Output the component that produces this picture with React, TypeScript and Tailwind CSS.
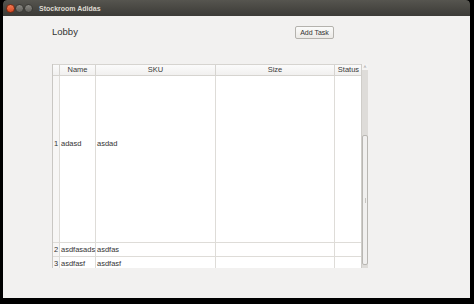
const rows = [
  { n: "1", name: "adasd", sku: "asdad", h: "h-[167px]", pad: "pt-[63px]" },
  { n: "2", name: "asdfasads", sku: "asdfas", h: "h-[14px]", pad: "pt-[2px]" },
  { n: "3", name: "asdfasf", sku: "asdfasf", h: "h-[14px]", pad: "pt-[2px]" },
];

function TitleBar() {
  return (
    <div className="flex h-[16px] items-center rounded-t-[4px] bg-gradient-to-b from-[#56554f] to-[#3c3b37] pl-[3px]">
      <span className="h-[9px] w-[9px] rounded-full border border-[#7a2a14] bg-gradient-to-b from-[#f27b55] to-[#d9471f]" />
      <span className="h-[9px] w-[9px] rounded-full border border-[#3a3935] bg-gradient-to-b from-[#8a8984] to-[#5f5e59]" />
      <span className="h-[9px] w-[9px] rounded-full border border-[#3a3935] bg-gradient-to-b from-[#8a8984] to-[#5f5e59]" />
      <span className="ml-[6px] text-[7px] font-bold leading-none text-[#dfdbd2]">Stockroom Adidas</span>
    </div>
  );
}

function Scrollbar() {
  return (
    <div className="flex w-[7px] flex-col border-l border-[#cfcdc9] bg-[#dedcd9]">
      <div className="flex h-[6px] items-center justify-center bg-[#f4f3f2] text-[5px] leading-none text-[#888]">
        ˄
      </div>
      <div className="h-[65px]" />
      <div className="flex flex-1 items-center justify-center rounded-[2px] border border-[#b9b7b3] bg-[#f1f0ef]">
        <span className="h-[5px] w-[1px] bg-[#c6c4c0]" />
      </div>
      <div className="h-[3px]" />
    </div>
  );
}

export default function App() {
  return (
    <div className="h-[304px] w-[474px] overflow-hidden bg-black pl-[3px] pr-[4px] pb-[6px]" style={{ fontFamily: '"Liberation Sans", Arial, sans-serif' }}>
      <div className="flex h-[298px] flex-col overflow-hidden rounded-t-[4px]">
        <TitleBar />
        <div className="flex-1 bg-[#f2f1f0] pl-[49px]">
          <div className="flex h-[48px] items-start pt-[10px]">
            <span className="w-[243px] text-[9.5px] leading-[12px] text-[#333]">Lobby</span>
            <button className="h-[13px] w-[39px] rounded-[2px] border border-[#b4b2ad] bg-gradient-to-b from-[#fbfbfa] to-[#ebe9e6] text-[7px] leading-none text-[#333]">
              Add Task
            </button>
          </div>
          <div className="flex h-[204px] w-[316px] border-l border-[#c9c7c3]">
            <div className="flex-1 overflow-hidden bg-white text-[7.5px] leading-[10px] text-[#333]">
              <div className="grid h-[12px] grid-cols-[7px_36px_120px_119px_27px] items-center border-y border-[#d6d4d0] bg-gradient-to-b from-[#fbfbfb] to-[#f1f0ef] text-center text-[#3a3a3a]">
                <span className="h-full border-r border-[#d6d4d0]" />
                <span className="border-r border-[#d6d4d0]">Name</span>
                <span className="border-r border-[#d6d4d0]">SKU</span>
                <span className="border-r border-[#d6d4d0]">Size</span>
                <span>Status</span>
              </div>
              {rows.map((r) => (
                <div key={r.n} className={`grid ${r.h} grid-cols-[7px_36px_120px_119px_27px] border-b border-[#dedcd8]`}>
                  <span className={`${r.pad} border-r border-[#dedcd8] bg-[#f7f6f5] text-center`}>{r.n}</span>
                  <span className={`${r.pad} border-r border-[#dedcd8] pl-[1px]`}>{r.name}</span>
                  <span className={`${r.pad} border-r border-[#dedcd8] pl-[1px]`}>{r.sku}</span>
                  <span className="border-r border-[#dedcd8]" />
                  <span />
                </div>
              ))}
            </div>
            <Scrollbar />
          </div>
        </div>
      </div>
    </div>
  );
}
